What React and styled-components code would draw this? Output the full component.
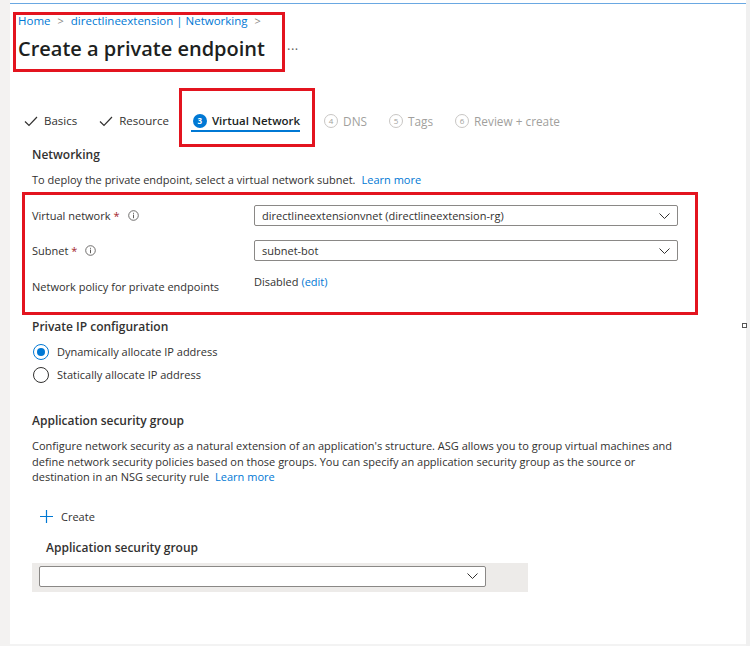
import React from 'react';
import styled, { createGlobalStyle } from 'styled-components';

const Global = createGlobalStyle`
  html, body { margin: 0; padding: 0; background: #fff; }
  body {
    font-family: "Open Sans", "Noto Sans", sans-serif;
    color: #323130;
    font-size: 11px;
    -webkit-font-smoothing: antialiased;
  }
  * { box-sizing: border-box; }
`;

const BLUE = '#0078d4';
const RED = '#e3141f';

const Shell = styled.div`
  display: flex;
  width: 750px;
  height: 646px;
  background: #f3f3f3;
  overflow: hidden;
`;

const LeftRail = styled.div`
  width: 10px;
  flex: none;
  background: #f3f2f1;
`;

const Main = styled.div`
  position: relative;
  flex: 1;
  height: 644px;
  background: #fff;
  border-top: 3px solid #fff;
  display: flex;
  flex-direction: column;
`;

const TopLine = styled.div`
  height: 1px;
  background: #6aa8e2;
  flex: none;
`;

const RightRail = styled.div`
  width: 4px;
  flex: none;
  background: #f0f0f0;
`;

const Handle = styled.div`
  position: absolute;
  right: -1px;
  top: 320px;
  width: 5px;
  height: 5px;
  border: 1px solid #555;
  background: #fff;
`;

const HeaderRow = styled.div`
  display: flex;
  align-items: flex-start;
  margin: 8px 0 0 3px;
`;

const Highlight = styled.div`
  border: 3px solid ${RED};
`;

const TitleBox = styled(Highlight)`
  width: 272px;
  height: 60px;
  padding: 0 0 0 2px;
`;

const Breadcrumb = styled.div`
  display: flex;
  align-items: center;
  gap: 7px;
  font-size: 11.5px;
  line-height: 14px;
  color: ${BLUE};
  margin-top: -1px;
`;

const Crumb = styled.span`
  color: ${BLUE};
`;

const Sep = styled.span`
  color: #8a8886;
  font-size: 11px;
`;

const Title = styled.h1`
  margin: 7px 0 0 0;
  font-size: 20px;
  line-height: 28px;
  font-weight: 600;
  color: #201f1e;
`;

const More = styled.span`
  margin: 28px 0 0 2px;
  font-size: 13px;
  letter-spacing: 0.5px;
  color: #605e5c;
`;

const TabRow = styled.div`
  display: flex;
  align-items: flex-start;
  gap: 22px;
  margin: 16px 0 0 14px;
  font-size: 11.5px;
  line-height: 16px;
`;

const Tab = styled.div`
  display: flex;
  align-items: center;
  gap: ${p => (p.$done ? 6 : 5)}px;
  padding-top: 25px;
  color: ${p => (p.$muted ? '#a19f9d' : '#323130')};
  font-size: ${p => (p.$muted ? 11.8 : 11.5)}px;
`;

const TabBox = styled(Highlight)`
  margin: 0 -13px 0 -12px;
  padding: 22px 12px 12px 9px;
`;

const ActiveTab = styled.div`
  display: flex;
  align-items: center;
  gap: 5px;
  padding: 0 0 1px 2px;
  border-bottom: 2px solid ${BLUE};
  font-weight: 600;
  color: #201f1e;
`;

const Step = styled.span`
  width: 14px;
  height: 14px;
  border-radius: 50%;
  display: inline-flex;
  align-items: center;
  justify-content: center;
  font-size: 8px;
  line-height: 1;
  font-weight: ${p => (p.$active ? 700 : 400)};
  color: ${p => (p.$active ? '#fff' : '#a19f9d')};
  background: ${p => (p.$active ? BLUE : 'transparent')};
  border: ${p => (p.$active ? 'none' : '1px solid #c8c6c4')};
`;

const Content = styled.div`
  padding-left: 22px;
  display: flex;
  flex-direction: column;
`;

const SectionTitle = styled.div`
  font-size: 12px;
  line-height: 16px;
  font-weight: 600;
  color: #323130;
  margin-top: ${p => p.$mt || 0}px;
`;

const Text = styled.div`
  font-size: 11px;
  line-height: ${p => p.$lh || 16}px;
  margin-top: ${p => p.$mt || 0}px;
  color: #323130;
`;

const Link = styled.a`
  color: ${BLUE};
  text-decoration: none;
  margin-left: ${p => p.$ml || 0}px;
`;

const FormBox = styled(Highlight)`
  margin: 4px 0 0 -10px;
  width: 676px;
  padding: 10px 17px 17px 7px;
  display: grid;
  grid-template-columns: 222px 424px;
  row-gap: 14px;
`;

const Label = styled.div`
  display: flex;
  align-items: center;
  font-size: 11px;
  line-height: 16px;
  padding-top: ${p => p.$pt || 0}px;
  align-self: ${p => (p.$top ? 'start' : 'center')};
`;

const Req = styled.span`
  color: #a4262c;
  margin-left: 3px;
`;

const Info = styled.span`
  width: 11px;
  height: 11px;
  margin-left: 8px;
  display: inline-flex;
`;

const Select = styled.div`
  display: flex;
  align-items: center;
  justify-content: space-between;
  height: 21px;
  width: ${p => p.$w || 'auto'};
  padding: 0 7px 0 7px;
  border: 1px solid #8a8886;
  border-radius: 2px;
  background: #fff;
  font-size: 11px;
  color: #323130;
`;

const Value = styled.div`
  font-size: 11px;
  line-height: 14px;
`;

const RadioGroup = styled.div`
  display: flex;
  flex-direction: column;
  gap: 7px;
  margin-top: 9px;
  margin-left: 1px;
`;

const RadioRow = styled.label`
  display: flex;
  align-items: center;
  gap: 8px;
  font-size: 11px;
  line-height: 16px;
`;

const RadioDot = styled.span`
  width: 16px;
  height: 16px;
  border-radius: 50%;
  border: 1px solid ${p => (p.$on ? BLUE : '#323130')};
  display: inline-flex;
  align-items: center;
  justify-content: center;
  &::after {
    content: '';
    width: 8px;
    height: 8px;
    border-radius: 50%;
    background: ${p => (p.$on ? BLUE : 'transparent')};
  }
`;

const CreateButton = styled.div`
  display: flex;
  align-items: center;
  gap: 8px;
  margin: 24px 0 0 8px;
  font-size: 11px;
  line-height: 16px;
`;

const SubLabel = styled(SectionTitle)`
  margin-left: 14px;
`;

const SelectTray = styled.div`
  margin-top: 7px;
  width: 496px;
  height: 29px;
  background: #edebe9;
  padding: 3px 0 0 7px;
`;

const Check = () => (
  <svg width="14" height="11" viewBox="0 0 14 11">
    <path d="M1 5.5 L5 9.5 L13 1" fill="none" stroke="#323130" strokeWidth="1.2" />
  </svg>
);

const Chevron = () => (
  <svg width="11" height="6" viewBox="0 0 11 6">
    <path d="M0.5 0.5 L5.5 5.5 L10.5 0.5" fill="none" stroke="#323130" strokeWidth="1" />
  </svg>
);

const InfoIcon = () => (
  <Info>
    <svg width="11" height="11" viewBox="0 0 11 11">
      <circle cx="5.5" cy="5.5" r="4.8" fill="none" stroke="#605e5c" strokeWidth="0.9" />
      <rect x="5" y="4.6" width="1" height="3.6" fill="#605e5c" />
      <rect x="5" y="2.8" width="1" height="1" fill="#605e5c" />
    </svg>
  </Info>
);

const Plus = () => (
  <svg width="13" height="13" viewBox="0 0 13 13">
    <path d="M6.5 0 V13 M0 6.5 H13" stroke={BLUE} strokeWidth="1.2" />
  </svg>
);

export default function App() {
  return (
    <>
      <Global />
      <Shell>
        <LeftRail />
        <Main>
          <TopLine />
          <HeaderRow>
            <TitleBox>
              <Breadcrumb>
                <Crumb>Home</Crumb>
                <Sep>&gt;</Sep>
                <Crumb>directlineextension | Networking</Crumb>
                <Sep>&gt;</Sep>
              </Breadcrumb>
              <Title>Create a private endpoint</Title>
            </TitleBox>
            <More>···</More>
          </HeaderRow>

          <TabRow>
            <Tab $done><Check />Basics</Tab>
            <Tab $done><Check />Resource</Tab>
            <TabBox>
              <ActiveTab><Step $active>3</Step>Virtual Network</ActiveTab>
            </TabBox>
            <Tab $muted><Step>4</Step>DNS</Tab>
            <Tab $muted><Step>5</Step>Tags</Tab>
            <Tab $muted><Step>6</Step>Review + create</Tab>
          </TabRow>

          <Content>
            <SectionTitle>Networking</SectionTitle>
            <Text $mt={9}>
              To deploy the private endpoint, select a virtual network subnet.
              <Link $ml={6}>Learn more</Link>
            </Text>

            <FormBox>
              <Label>Virtual network<Req>*</Req><InfoIcon /></Label>
              <Select>
                directlineextensionvnet (directlineextension-rg)
                <Chevron />
              </Select>
              <Label>Subnet<Req>*</Req><InfoIcon /></Label>
              <Select>
                subnet-bot
                <Chevron />
              </Select>
              <Label $top $pt={4}>Network policy for private endpoints</Label>
              <Value>Disabled <Link>(edit)</Link></Value>
            </FormBox>

            <SectionTitle $mt={4}>Private IP configuration</SectionTitle>
            <RadioGroup>
              <RadioRow><RadioDot $on />Dynamically allocate IP address</RadioRow>
              <RadioRow><RadioDot />Statically allocate IP address</RadioRow>
            </RadioGroup>

            <SectionTitle $mt={30}>Application security group</SectionTitle>
            <Text $mt={9} $lh={15.5}>
              Configure network security as a natural extension of an application's structure. ASG allows you to group virtual machines and<br />
              define network security policies based on those groups. You can specify an application security group as the source or<br />
              destination in an NSG security rule
              <Link $ml={6}>Learn more</Link>
            </Text>

            <CreateButton><Plus />Create</CreateButton>
            <SubLabel $mt={15}>Application security group</SubLabel>
            <SelectTray>
              <Select $w="447px"><span /><Chevron /></Select>
            </SelectTray>
          </Content>
          <Handle />
        </Main>
        <RightRail />
      </Shell>
    </>
  );
}
